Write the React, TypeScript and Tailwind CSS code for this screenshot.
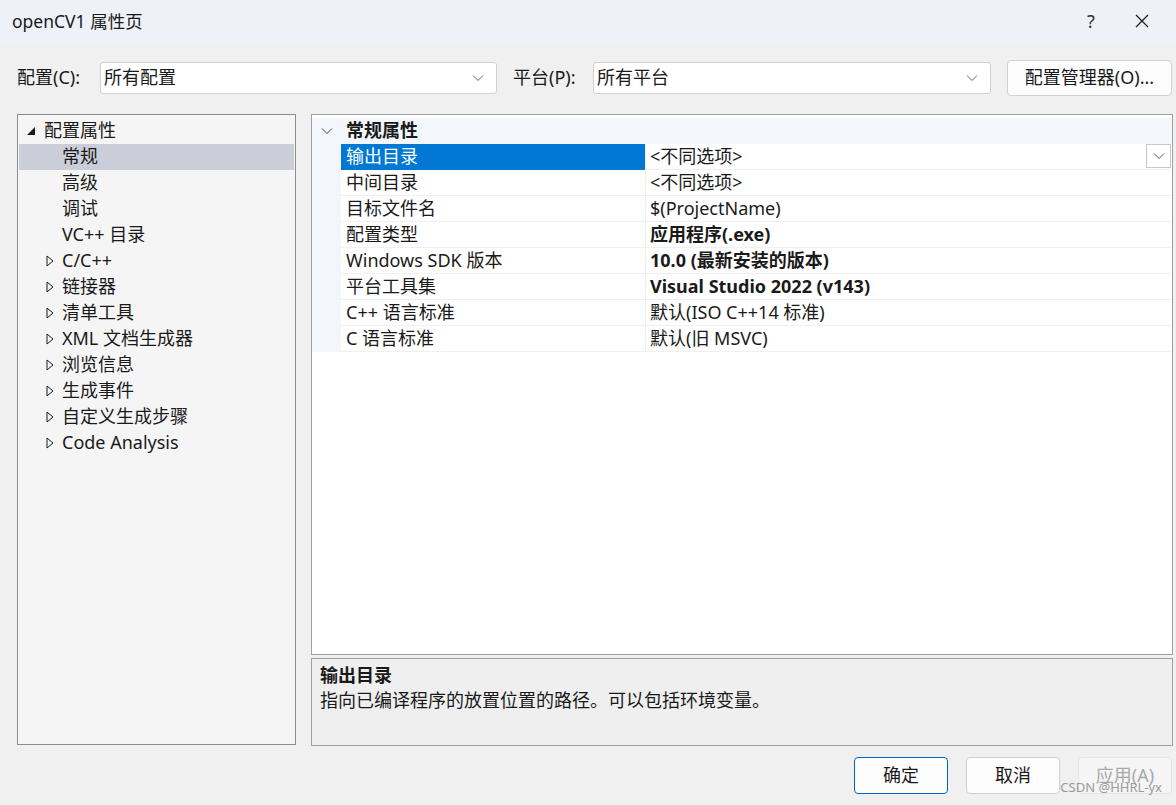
import React from 'react';

const font = { fontFamily: '"Segoe UI", "Noto Sans", "Noto Sans CJK SC", sans-serif' };

const treeChildren = ['常规', '高级', '调试', 'VC++ 目录'];
const treeGroups = ['C/C++', '链接器', '清单工具', 'XML 文档生成器', '浏览信息', '生成事件', '自定义生成步骤', 'Code Analysis'];

const props: { name: string; value: string; bold?: boolean }[] = [
  { name: '输出目录', value: '<不同选项>' },
  { name: '中间目录', value: '<不同选项>' },
  { name: '目标文件名', value: '$(ProjectName)' },
  { name: '配置类型', value: '应用程序(.exe)', bold: true },
  { name: 'Windows SDK 版本', value: '10.0 (最新安装的版本)', bold: true },
  { name: '平台工具集', value: 'Visual Studio 2022 (v143)', bold: true },
  { name: 'C++ 语言标准', value: '默认(ISO C++14 标准)' },
  { name: 'C 语言标准', value: '默认(旧 MSVC)' },
];

const Chevron = ({ className = '' }: { className?: string }) => (
  <svg width="12" height="8" viewBox="0 0 12 8" className={className}>
    <path d="M1 1.5 L6 6.5 L11 1.5" fill="none" stroke="currentColor" strokeWidth="1" />
  </svg>
);

const Triangle = () => (
  <svg width="8" height="12" viewBox="0 0 8 12" className="text-[#1a1a1a]">
    <path d="M1 1 L7 6 L1 11 Z" fill="none" stroke="currentColor" strokeWidth="1" />
  </svg>
);

const Select = ({ value }: { value: string }) => (
  <div className="flex h-[32px] flex-1 items-center justify-between rounded-[3px] border border-[#d0d0d0] bg-white pl-[3px] pr-[12px]">
    <span className="text-[18px] text-[#1a1a1a]">{value}</span>
    <Chevron className="text-[#606060]" />
  </div>
);

export default function App() {
  return (
    <div className="flex h-[805px] w-[1176px] flex-col bg-[#f0f0f0] text-[18px] text-[#1a1a1a]" style={font}>
      {/* title bar */}
      <div className="flex h-[43px] items-center justify-between bg-[#eef1f8] pl-[12px]">
        <span className="text-[17.5px]">openCV1 属性页</span>
        <div className="flex items-center">
          <span className="w-[50px] text-center text-[18px] text-[#333]">?</span>
          <svg width="60" height="20" viewBox="0 0 60 20">
            <path d="M20 4 L32 16 M32 4 L20 16" stroke="#1a1a1a" strokeWidth="1.2" fill="none" />
          </svg>
        </div>
      </div>

      {/* config row */}
      <div className="flex items-center pl-[17px] pr-[4px] pt-[17px]">
        <span className="w-[83px]">配置(C):</span>
        <div className="flex w-[397px]"><Select value="所有配置" /></div>
        <span className="ml-[16px] w-[80px]">平台(P):</span>
        <div className="flex w-[398px]"><Select value="所有平台" /></div>
        <button className="ml-[16px] h-[36px] flex-1 rounded-[4px] border border-[#d0d0d0] bg-[#fdfdfd]">
          配置管理器(O)...
        </button>
      </div>

      {/* main */}
      <div className="flex flex-1 gap-[15px] pl-[17px] pr-[3px] pt-[18px]">
        {/* tree */}
        <div className="h-[631px] w-[279px] border border-[#8c8c8c] bg-[#f5f5f5] pt-[3px]">
          <div className="flex h-[26px] items-center pl-[8px]">
            <svg width="10" height="10" viewBox="0 0 10 10" className="mr-[8px]">
              <path d="M9 1 L9 9 L1 9 Z" fill="#1a1a1a" />
            </svg>
            配置属性
          </div>
          {treeChildren.map((t, i) => (
            <div
              key={t}
              className={`mx-[1px] flex h-[26px] items-center pl-[43px] ${i === 0 ? 'bg-[#cbcdd9]' : ''}`}
            >
              {t}
            </div>
          ))}
          {treeGroups.map(t => (
            <div key={t} className="flex h-[26px] items-center pl-[28px]">
              <Triangle />
              <span className="ml-[8px]">{t}</span>
            </div>
          ))}
        </div>

        {/* right side */}
        <div className="flex flex-1 flex-col gap-[3px]">
          <div className="h-[541px] border border-[#a0a0a0] bg-white pt-[3px]">
            <div className="flex h-[26px] items-center bg-[#f3f6fb] font-bold">
              <span className="flex w-[30px] justify-center text-[#444]"><Chevron /></span>
              <span className="ml-[4px]">常规属性</span>
            </div>
            {props.map((p, i) => (
              <div key={p.name} className="flex h-[26px]">
                <div className="w-[29px] bg-[#f3f6fb]" />
                <div
                  className={`flex w-[304px] items-center pl-[5px] ${i === 0 ? 'bg-[#0078d4] text-white' : 'border-b border-[#f0f0f0]'}`}
                >
                  {p.name}
                </div>
                <div className="flex flex-1 items-center justify-between border-b border-l border-[#f0f0f0] pl-[4px]">
                  <span className={p.bold ? 'font-bold' : ''}>{p.value}</span>
                  {i === 0 && (
                    <div className="mr-[1px] flex h-[24px] w-[25px] items-center justify-center border border-[#c8c8c8] bg-white text-[#555]">
                      <Chevron />
                    </div>
                  )}
                </div>
              </div>
            ))}
          </div>
          <div className="h-[88px] border border-[#a0a0a0] bg-[#efefef] px-[8px] pt-[4px]">
            <div className="font-bold leading-[25px]">输出目录</div>
            <div className="leading-[25px]">指向已编译程序的放置位置的路径。可以包括环境变量。</div>
          </div>
        </div>
      </div>

      {/* buttons */}
      <div className="relative flex h-[60px] items-center justify-end gap-[18px] pr-[4px]">
        <button className="h-[37px] w-[94px] rounded-[4px] border border-[#0067c0] bg-[#fdfdfd]">确定</button>
        <button className="h-[37px] w-[94px] rounded-[4px] border border-[#d0d0d0] bg-[#fdfdfd]">取消</button>
        <button className="h-[37px] w-[94px] rounded-[4px] border border-[#e5e5e5] bg-[#f5f5f5] text-[#a8a8a8]">应用(A)</button>
        <span className="absolute bottom-[8px] right-[14px] text-[13px] text-[#9a9a9a]">CSDN @HHRL-yx</span>
      </div>
    </div>
  );
}
